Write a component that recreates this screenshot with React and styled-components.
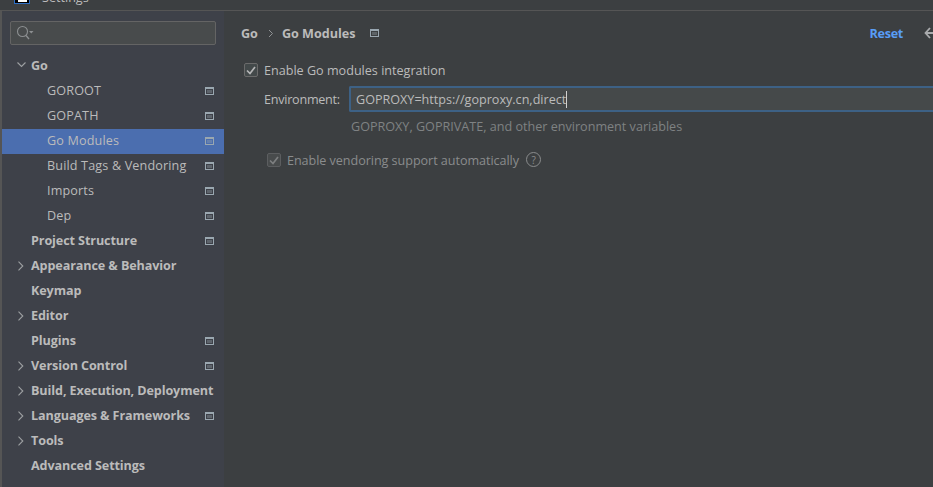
import React from 'react';
import styled, { createGlobalStyle } from 'styled-components';

const GlobalStyle = createGlobalStyle`
  html, body {
    margin: 0;
    padding: 0;
    background: #3c3f41;
    overflow: hidden;
  }
  * {
    box-sizing: border-box;
  }
`;

const Window = styled.div`
  width: 933px;
  height: 487px;
  display: flex;
  flex-direction: column;
  overflow: hidden;
  background: #3c3f41;
  color: #bbbbbb;
  font-family: 'Open Sans', 'Noto Sans', sans-serif;
  font-size: 12.6px;
`;

const TitleBar = styled.div`
  height: 11px;
  flex: none;
  display: flex;
  align-items: flex-start;
  gap: 12px;
  padding-left: 14px;
  background: #3c3f41;
  border-bottom: 1px solid #555555;
  overflow: hidden;
`;

const AppLogo = styled.div`
  width: 16px;
  height: 4px;
  flex: none;
  display: flex;
  align-items: flex-start;
  justify-content: center;
  background: #000000;
  border: 1px solid #2f6fc4;
  border-top: none;

  &::after {
    content: '';
    width: 9px;
    height: 2px;
    background: #ffffff;
  }
`;

const TitleText = styled.div`
  line-height: 14px;
  margin-top: -9px;
  color: #bbbbbb;
`;

const Body = styled.div`
  flex: 1;
  display: flex;
  min-height: 0;
`;

const Sidebar = styled.div`
  width: 224px;
  flex: none;
  display: flex;
  flex-direction: column;
  background: #3e4149;
  border-left: 2px solid #555555;
`;

const SearchWrap = styled.div`
  padding: 10px 8px 9px;
`;

const SearchBox = styled.div`
  height: 24px;
  display: flex;
  align-items: center;
  padding-left: 5px;
  background: #484b4c;
  border: 1px solid #646464;
  border-radius: 2px;
`;

const Tree = styled.div`
  display: flex;
  flex-direction: column;
`;

const Row = styled.div`
  height: 25px;
  display: flex;
  align-items: center;
  padding-left: ${(props) => (props.$child ? 45 : 29)}px;
  padding-right: 10px;
  padding-bottom: 2px;
  position: relative;
  font-weight: ${(props) => (props.$child ? 400 : 700)};
  letter-spacing: ${(props) => (props.$child ? 0.15 : -0.1)}px;
  color: #bbbbbb;
  background: ${(props) => (props.$selected ? '#4b6eaf' : 'transparent')};
  white-space: nowrap;
`;

const Arrow = styled.svg`
  position: absolute;
  left: 15px;
  top: 7px;
`;

const Label = styled.span`
  flex: 1;
`;

const Main = styled.div`
  flex: 1;
  min-width: 0;
  display: flex;
  flex-direction: column;
  background: #3c3f41;
`;

const Header = styled.div`
  height: 44px;
  flex: none;
  display: flex;
  align-items: center;
  padding-left: 17px;
  white-space: nowrap;
  font-weight: 700;
`;

const CrumbArrow = styled.svg`
  margin: 0 8px 0 10px;
`;

const CrumbIcon = styled.span`
  display: flex;
  margin-left: 14px;
`;

const HeaderActions = styled.div`
  margin-left: auto;
  display: flex;
  align-items: center;
  gap: 21px;
  margin-right: -5px;
`;

const ResetLink = styled.span`
  color: #589df6;
  letter-spacing: -0.3px;
`;

const Content = styled.div`
  display: flex;
  flex-direction: column;
  padding: 5px 0 0 20px;
`;

const CheckRow = styled.div`
  height: 20px;
  display: flex;
  align-items: center;
  gap: 6px;
  white-space: nowrap;
  letter-spacing: ${(props) => (props.$disabled ? -0.05 : 0)}px;
  color: ${(props) => (props.$disabled ? '#8a8c8d' : '#bbbbbb')};
  margin-left: ${(props) => (props.$disabled ? 23 : 0)}px;
  margin-top: ${(props) => props.$top || 0}px;
`;

const CheckBox = styled.div`
  width: 14px;
  height: 14px;
  display: flex;
  align-items: center;
  justify-content: center;
  background: ${(props) => (props.$disabled ? '#484b4c' : '#43494a')};
  border: 1px solid ${(props) => (props.$disabled ? '#5c5e60' : '#6b6b6b')};
  border-radius: 2px;
`;

const EnvRow = styled.div`
  display: flex;
  align-items: center;
  margin-top: 6px;
  margin-left: 20px;
  white-space: nowrap;
`;

const EnvLabel = styled.span`
  width: 85px;
  flex: none;
  letter-spacing: -0.25px;
`;

const EnvInput = styled.div`
  flex: 1;
  height: 26px;
  margin-right: -4px;
  display: flex;
  align-items: center;
  padding-left: 5px;
  background: #45494a;
  border: 2px solid #3d6185;
  border-right: none;
  border-radius: 2px 0 0 2px;
  color: #bbbbbb;
  white-space: nowrap;
`;

const Caret = styled.span`
  width: 1px;
  height: 17px;
  background: #d0d0d0;
`;

const HintText = styled.div`
  margin-left: 107px;
  margin-top: 6px;
  line-height: 18px;
  color: #7f8283;
  white-space: nowrap;
`;

const HelpIcon = styled.div`
  width: 15px;
  height: 15px;
  margin-left: 1px;
  margin-bottom: 1px;
  display: flex;
  align-items: center;
  justify-content: center;
  border: 1px solid #8a8c8d;
  border-radius: 50%;
  font-size: 10px;
  color: #8a8c8d;
`;

function ProjectIcon({ color = '#9aa7b0' }) {
  return (
    <svg width="9" height="8" viewBox="0 0 9 8">
      <rect x="0.5" y="0.5" width="8" height="7" fill="none" stroke={color} />
      <rect x="1" y="1" width="7" height="1" fill={color} />
      <rect x="2" y="3" width="5" height="3" fill={color} opacity="0.35" />
    </svg>
  );
}

function ChevronRight() {
  return (
    <Arrow width="8" height="10" viewBox="0 0 8 10">
      <path d="M1.5 0.7l4.3 4.3-4.3 4.3" fill="none" stroke="#9da0a2" strokeWidth="1.1" />
    </Arrow>
  );
}

function ChevronDown() {
  return (
    <Arrow width="10" height="8" viewBox="0 0 10 8">
      <path d="M0.5 1.5l4 4 4-4" fill="none" stroke="#9da0a2" strokeWidth="1.1" />
    </Arrow>
  );
}

const treeItems = [
  { title: 'Go', open: true },
  { title: 'GOROOT', child: true, project: true },
  { title: 'GOPATH', child: true, project: true },
  { title: 'Go Modules', child: true, project: true, selected: true },
  { title: 'Build Tags & Vendoring', child: true, project: true },
  { title: 'Imports', child: true, project: true },
  { title: 'Dep', child: true, project: true },
  { title: 'Project Structure', project: true },
  { title: 'Appearance & Behavior', closed: true },
  { title: 'Keymap' },
  { title: 'Editor', closed: true },
  { title: 'Plugins', project: true },
  { title: 'Version Control', closed: true, project: true },
  { title: 'Build, Execution, Deployment', closed: true },
  { title: 'Languages & Frameworks', closed: true, project: true },
  { title: 'Tools', closed: true },
  { title: 'Advanced Settings' },
];

function App() {
  return (
    <>
      <GlobalStyle />
      <Window>
        <TitleBar>
          <AppLogo />
          <TitleText>Settings</TitleText>
        </TitleBar>
        <Body>
          <Sidebar>
            <SearchWrap>
              <SearchBox>
                <svg width="20" height="16" viewBox="0 0 20 16">
                  <circle cx="6.5" cy="6.5" r="5" fill="none" stroke="#8c8f91" strokeWidth="1.1" />
                  <path d="M10 10.5L13 14" stroke="#8c8f91" strokeWidth="1.3" />
                  <path d="M13 6h4.5l-2.2 2.5z" fill="#8c8f91" />
                </svg>
              </SearchBox>
            </SearchWrap>
            <Tree>
              {treeItems.map((item) => (
                <Row key={item.title} $child={item.child} $selected={item.selected}>
                  {item.open && <ChevronDown />}
                  {item.closed && <ChevronRight />}
                  <Label>{item.title}</Label>
                  {item.project && <ProjectIcon />}
                </Row>
              ))}
            </Tree>
          </Sidebar>
          <Main>
            <Header>
              Go
              <CrumbArrow width="6" height="9" viewBox="0 0 6 9">
                <path d="M1 1l3.5 3.5L1 8" fill="none" stroke="#8f9294" strokeWidth="1" />
              </CrumbArrow>
              Go Modules
              <CrumbIcon>
                <ProjectIcon />
              </CrumbIcon>
              <HeaderActions>
                <ResetLink>Reset</ResetLink>
                <svg width="14" height="12" viewBox="0 0 14 12">
                  <path d="M6 1L1.5 6 6 11M2 6h12" fill="none" stroke="#a9abad" strokeWidth="1.8" />
                </svg>
              </HeaderActions>
            </Header>
            <Content>
              <CheckRow>
                <CheckBox>
                  <svg width="10" height="9" viewBox="0 0 10 9">
                    <path d="M1 4.5l3 3L9 1" fill="none" stroke="#b5b6b7" strokeWidth="1.7" />
                  </svg>
                </CheckBox>
                Enable Go modules integration
              </CheckRow>
              <EnvRow>
                <EnvLabel>Environment:</EnvLabel>
                <EnvInput>
                  GOPROXY=https://goproxy.cn,direct
                  <Caret />
                </EnvInput>
              </EnvRow>
              <HintText>GOPROXY, GOPRIVATE, and other environment variables</HintText>
              <CheckRow $disabled $top={14}>
                <CheckBox $disabled>
                  <svg width="10" height="9" viewBox="0 0 10 9">
                    <path d="M1 4.5l3 3L9 1" fill="none" stroke="#7d7f80" strokeWidth="1.7" />
                  </svg>
                </CheckBox>
                Enable vendoring support automatically
                <HelpIcon>?</HelpIcon>
              </CheckRow>
            </Content>
          </Main>
        </Body>
      </Window>
    </>
  );
}

export default App;
